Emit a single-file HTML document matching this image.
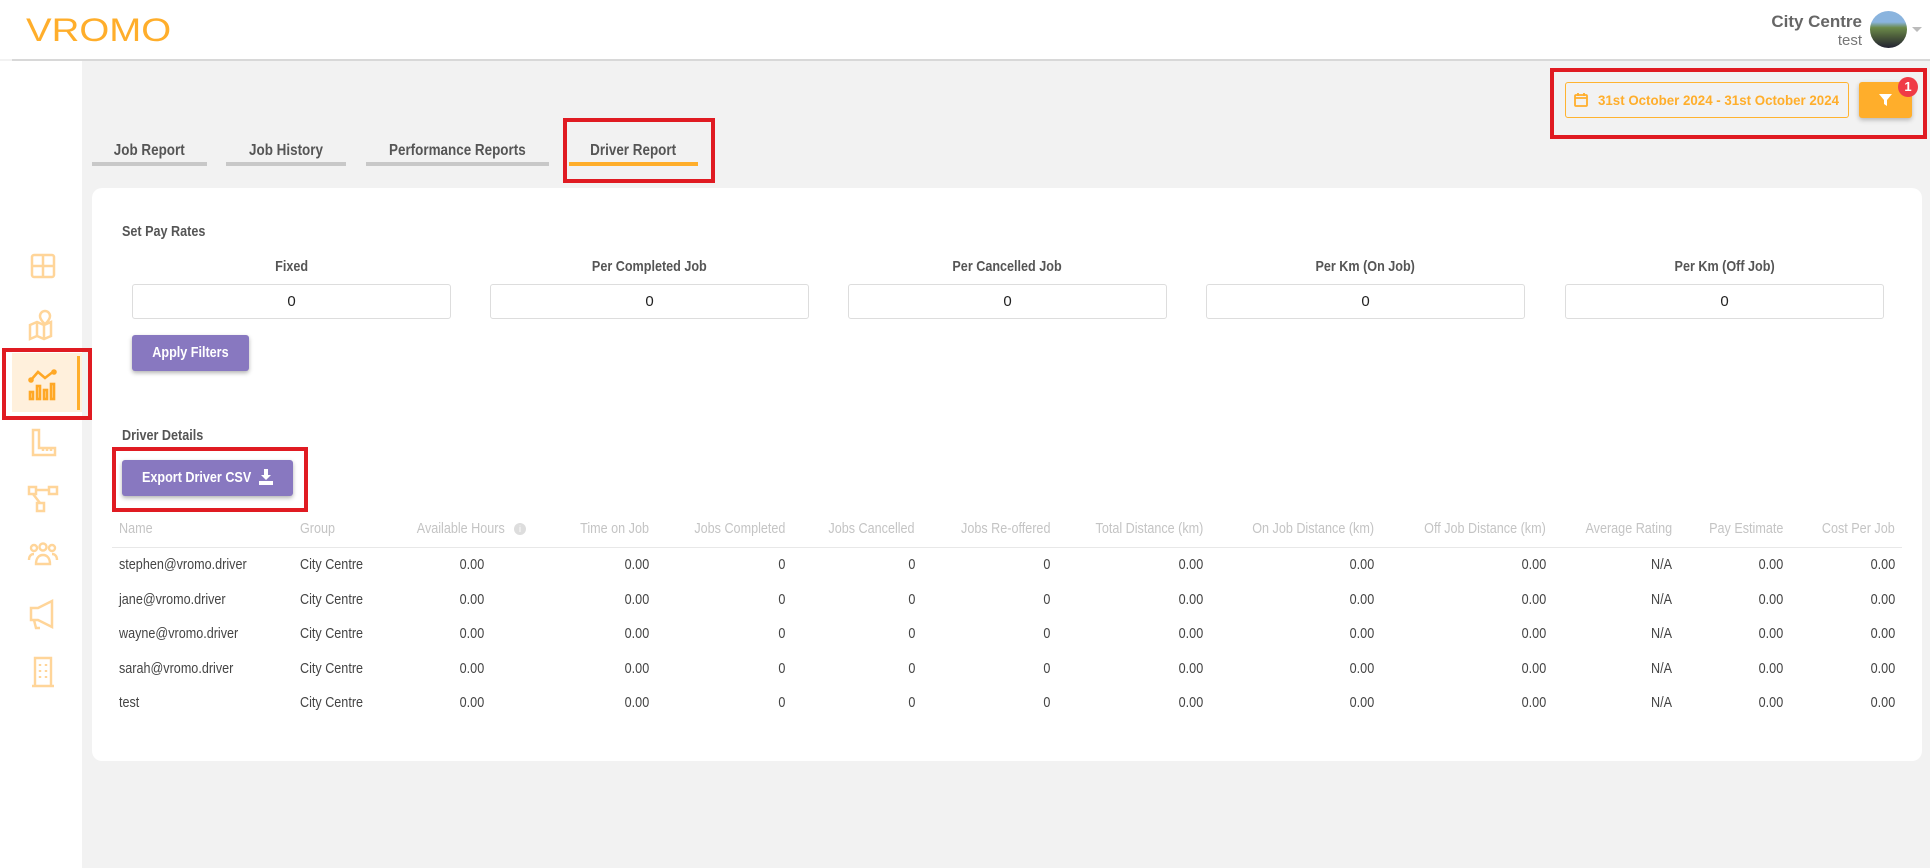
<!DOCTYPE html><html><head><meta charset="utf-8"><style>
*{box-sizing:border-box;margin:0;padding:0}
body{width:1930px;height:868px;overflow:hidden;background:#f2f2f2;font-family:"Liberation Sans",sans-serif;color:#555;position:relative}
.a{position:absolute}
.s{display:inline-block;transform:scaleX(.84);transform-origin:left center;white-space:nowrap}
.r .s{transform-origin:right center}
.c .s{transform-origin:center center}
.hdr{left:0;top:0;width:1930px;height:59px;background:#fff}
.hline{left:12px;top:59px;width:1918px;height:2px;background:#d8d8d8}
.side{left:0;top:61px;width:82px;height:807px;background:#fff}
.tab{top:142px;font-size:16px;font-weight:bold;color:#555;text-align:center;height:24px}
.tab i{position:absolute;left:0;right:0;bottom:0;height:4px;background:#c8c8c8}
.card{left:92px;top:188px;width:1830px;height:573px;background:#fff;border-radius:10px}
.lbl{top:258px;font-size:15px;font-weight:bold;color:#555;text-align:center;width:319px}
.inp{top:284px;width:319px;height:35px;border:1px solid #ddd;border-radius:3px;text-align:center;font-size:15px;line-height:33px;color:#222}
.btn{background:#8878c0;color:#fff;font-weight:bold;font-size:15px;border-radius:3px;box-shadow:0 2px 4px rgba(0,0,0,.3);text-align:center}
.th{top:520px;font-size:15px;color:#c4c4c4;white-space:nowrap}
.td{font-size:15px;color:#444;white-space:nowrap}
.r{text-align:right}
.red{border:4px solid #e01b22}
svg.ic{position:absolute;left:27px;overflow:visible}
</style></head><body>
<div class="a hdr"></div>
<div class="a" style="left:26px;top:12px;font-size:32px;color:#ffae2b"><span class="s" style="transform:scaleX(1.2)">VROMO</span></div>
<div class="a hline"></div>
<div class="a r" style="right:68px;top:12px;font-size:17px;font-weight:bold;color:#666">City Centre</div>
<div class="a r" style="right:68px;top:32px;font-size:15px;color:#777">test</div>
<div class="a" style="left:1870px;top:11px;width:37px;height:37px;border-radius:50%;background:linear-gradient(#8ab4de 0,#8ab4de 30%,#6b8a4a 45%,#4a5a3a 70%,#223 100%)"></div>
<div class="a" style="left:1912px;top:27px;border:5px solid transparent;border-top:5px solid #bbb"></div>
<div class="a side"></div>

<svg class="ic" style="top:252px" width="32" height="30" fill="none" stroke="#ffd599" stroke-width="2.5"><rect x="5" y="3" width="22" height="22" rx="2"/><path d="M16 3v22M5 14h22"/></svg>
<svg class="ic" style="top:310px" width="32" height="30" fill="none" stroke="#ffd599" stroke-width="2.5"><path d="M3 15l7-3 7 3 7-3v14l-7 3-7-3-7 3zM10 12v14M17 15v14"/><path d="M18 1a5 5 0 0 1 5 5c0 4-5 8-5 8s-5-4-5-8a5 5 0 0 1 5-5z" fill="#fff"/></svg>
<div class="a" style="left:12px;top:353px;width:70px;height:59px;background:#fff0dc"></div>
<div class="a" style="left:77px;top:356px;width:3px;height:54px;background:#ffae2b"></div>
<svg class="ic" style="top:368px" width="32" height="34" fill="none" stroke="#ffa826" stroke-width="2.6"><path d="M4 12l7-8 7 6 9-7"/><circle cx="4" cy="12" r="1.5" fill="#ffa826"/><circle cx="27" cy="4" r="1.5" fill="#ffa826"/><rect x="3" y="24" width="3" height="7"/><rect x="10" y="18" width="3" height="13"/><rect x="17" y="22" width="3" height="9"/><rect x="24" y="16" width="3" height="15"/></svg>
<div class="a red" style="left:2px;top:348px;width:90px;height:72px"></div>
<svg class="ic" style="top:428px" width="32" height="30" fill="none" stroke="#ffd599" stroke-width="2.5"><path d="M6 2h6v18h16v7H6zM16 20v3M20 20v3M24 20v3"/></svg>
<svg class="ic" style="top:484px" width="32" height="30" fill="none" stroke="#ffd599" stroke-width="2.5"><rect x="2" y="3" width="7" height="7"/><rect x="22" y="3" width="8" height="7"/><rect x="10" y="19" width="7" height="8"/><path d="M9 6h13M6 10l7 9"/></svg>
<svg class="ic" style="top:542px" width="32" height="30" fill="none" stroke="#ffd599" stroke-width="2.4"><circle cx="7" cy="6" r="3"/><circle cx="16" cy="5" r="3.5"/><circle cx="25" cy="6" r="3"/><path d="M9 22c0-6 3-9 7-9s7 3 7 9zM2 18c0-4 2-6 5-6M30 18c0-4-2-6-5-6"/></svg>
<svg class="ic" style="top:600px" width="32" height="30" fill="none" stroke="#ffd599" stroke-width="2.5"><path d="M4 8h7l14-7v26l-14-7H4zM7 20l2 8h4"/></svg>
<svg class="ic" style="top:656px" width="32" height="32" fill="none" stroke="#ffd599" stroke-width="2.4"><path d="M8 2h16v28H8zM5 30h22"/><path d="M13 8v2M19 8v2M13 14v2M19 14v2M13 20v2M19 20v2"/></svg>

<div class="a" style="left:1565px;top:82px;width:284px;height:36px;border:1px solid #ffb32f;border-radius:3px;font-weight:bold;font-size:14px;color:#ffae2b;line-height:34px;padding-left:32px"><span class="s" style="transform:scaleX(.95)">31st October 2024 - 31st October 2024</span></div>
<svg class="a" style="left:1574px;top:92px" width="14" height="15" fill="none" stroke="#ffae2b" stroke-width="1.8"><rect x="1" y="3" width="12" height="11" rx="1"/><path d="M4 1v3M10 1v3M1 6h12"/></svg>
<div class="a" style="left:1859px;top:82px;width:53px;height:36px;background:#ffae2b;border-radius:3px;box-shadow:0 2px 5px rgba(0,0,0,.25)"></div>
<svg class="a" style="left:1878px;top:92px" width="15" height="15"><path d="M1 2h13l-5 6v6l-3-2V8z" fill="#fff"/></svg>
<div class="a" style="left:1898px;top:77px;width:20px;height:20px;border-radius:50%;background:#f03a46;color:#fff;font-size:13px;font-weight:bold;text-align:center;line-height:20px">1</div>
<div class="a red" style="left:1550px;top:68px;width:377px;height:71px"></div>

<div class="a tab c" style="left:92px;width:115px"><span class="s">Job Report</span><i></i></div>
<div class="a tab c" style="left:226px;width:120px"><span class="s">Job History</span><i></i></div>
<div class="a tab c" style="left:366px;width:183px"><span class="s">Performance Reports</span><i></i></div>
<div class="a tab c" style="left:569px;width:129px"><span class="s">Driver Report</span><i style="background:#ffae2b"></i></div>
<div class="a red" style="left:563px;top:118px;width:152px;height:65px"></div>

<div class="a card"></div>
<div class="a" style="left:122px;top:223px;font-size:15px;font-weight:bold;color:#555"><span class="s">Set Pay Rates</span></div>
<div class="a lbl c" style="left:132px"><span class="s">Fixed</span></div>
<div class="a lbl c" style="left:490px"><span class="s">Per Completed Job</span></div>
<div class="a lbl c" style="left:848px"><span class="s">Per Cancelled Job</span></div>
<div class="a lbl c" style="left:1206px"><span class="s">Per Km (On Job)</span></div>
<div class="a lbl c" style="left:1565px"><span class="s">Per Km (Off Job)</span></div>
<div class="a inp" style="left:132px">0</div>
<div class="a inp" style="left:490px">0</div>
<div class="a inp" style="left:848px">0</div>
<div class="a inp" style="left:1206px">0</div>
<div class="a inp" style="left:1565px">0</div>
<div class="a btn c" style="left:132px;top:335px;width:117px;height:36px;line-height:36px"><span class="s">Apply Filters</span></div>

<div class="a" style="left:122px;top:427px;font-size:15px;font-weight:bold;color:#555"><span class="s">Driver Details</span></div>
<div class="a btn" style="left:122px;top:460px;width:171px;height:36px;line-height:36px;text-align:left;padding-left:20px"><span class="s">Export Driver CSV</span></div>
<svg class="a" style="left:259px;top:469px" width="14" height="16" fill="#fff"><path d="M5 0h4v6h3l-5 5-5-5h3zM0 12h14v4H0z"/></svg>
<div class="a red" style="left:112px;top:447px;width:196px;height:65px"></div>

<div class="a th" style="left:119px"><span class="s">Name</span></div>
<div class="a th" style="left:300px"><span class="s">Group</span></div>
<div class="a th r" style="right:1425px"><span class="s">Available Hours</span></div>
<div class="a" style="left:514px;top:523px;width:12px;height:12px;border-radius:50%;background:#ddd;color:#fff;font-size:9px;text-align:center;line-height:12px">i</div>
<div class="a th r" style="right:1281px"><span class="s">Time on Job</span></div>
<div class="a th r" style="right:1145px"><span class="s">Jobs Completed</span></div>
<div class="a th r" style="right:1015px"><span class="s">Jobs Cancelled</span></div>
<div class="a th r" style="right:880px"><span class="s">Jobs Re-offered</span></div>
<div class="a th r" style="right:727px"><span class="s">Total Distance (km)</span></div>
<div class="a th r" style="right:556px"><span class="s">On Job Distance (km)</span></div>
<div class="a th r" style="right:384px"><span class="s">Off Job Distance (km)</span></div>
<div class="a th r" style="right:258px"><span class="s">Average Rating</span></div>
<div class="a th r" style="right:147px"><span class="s">Pay Estimate</span></div>
<div class="a th r" style="right:35px"><span class="s">Cost Per Job</span></div>
<div class="a" style="left:112px;top:547px;width:1790px;height:1px;background:#e8e8e8"></div>

<div id="rows"></div>
<script>
var names=["stephen@vromo.driver","jane@vromo.driver","wayne@vromo.driver","sarah@vromo.driver","test"];
var cols=[[1446,"0.00"],[1281,"0.00"],[1145,"0"],[1015,"0"],[880,"0"],[727,"0.00"],[556,"0.00"],[384,"0.00"],[258,"N/A"],[147,"0.00"],[35,"0.00"]];
var h="";
names.forEach(function(n,i){var t=556+i*34.5;
h+='<div class="a td" style="left:119px;top:'+t+'px"><span class="s">'+n+'</span></div><div class="a td" style="left:300px;top:'+t+'px"><span class="s">City Centre</span></div>';
cols.forEach(function(c){h+='<div class="a td r" style="right:'+c[0]+'px;top:'+t+'px"><span class="s">'+c[1]+'</span></div>';});});
document.getElementById("rows").innerHTML=h;
</script>
</body></html>
